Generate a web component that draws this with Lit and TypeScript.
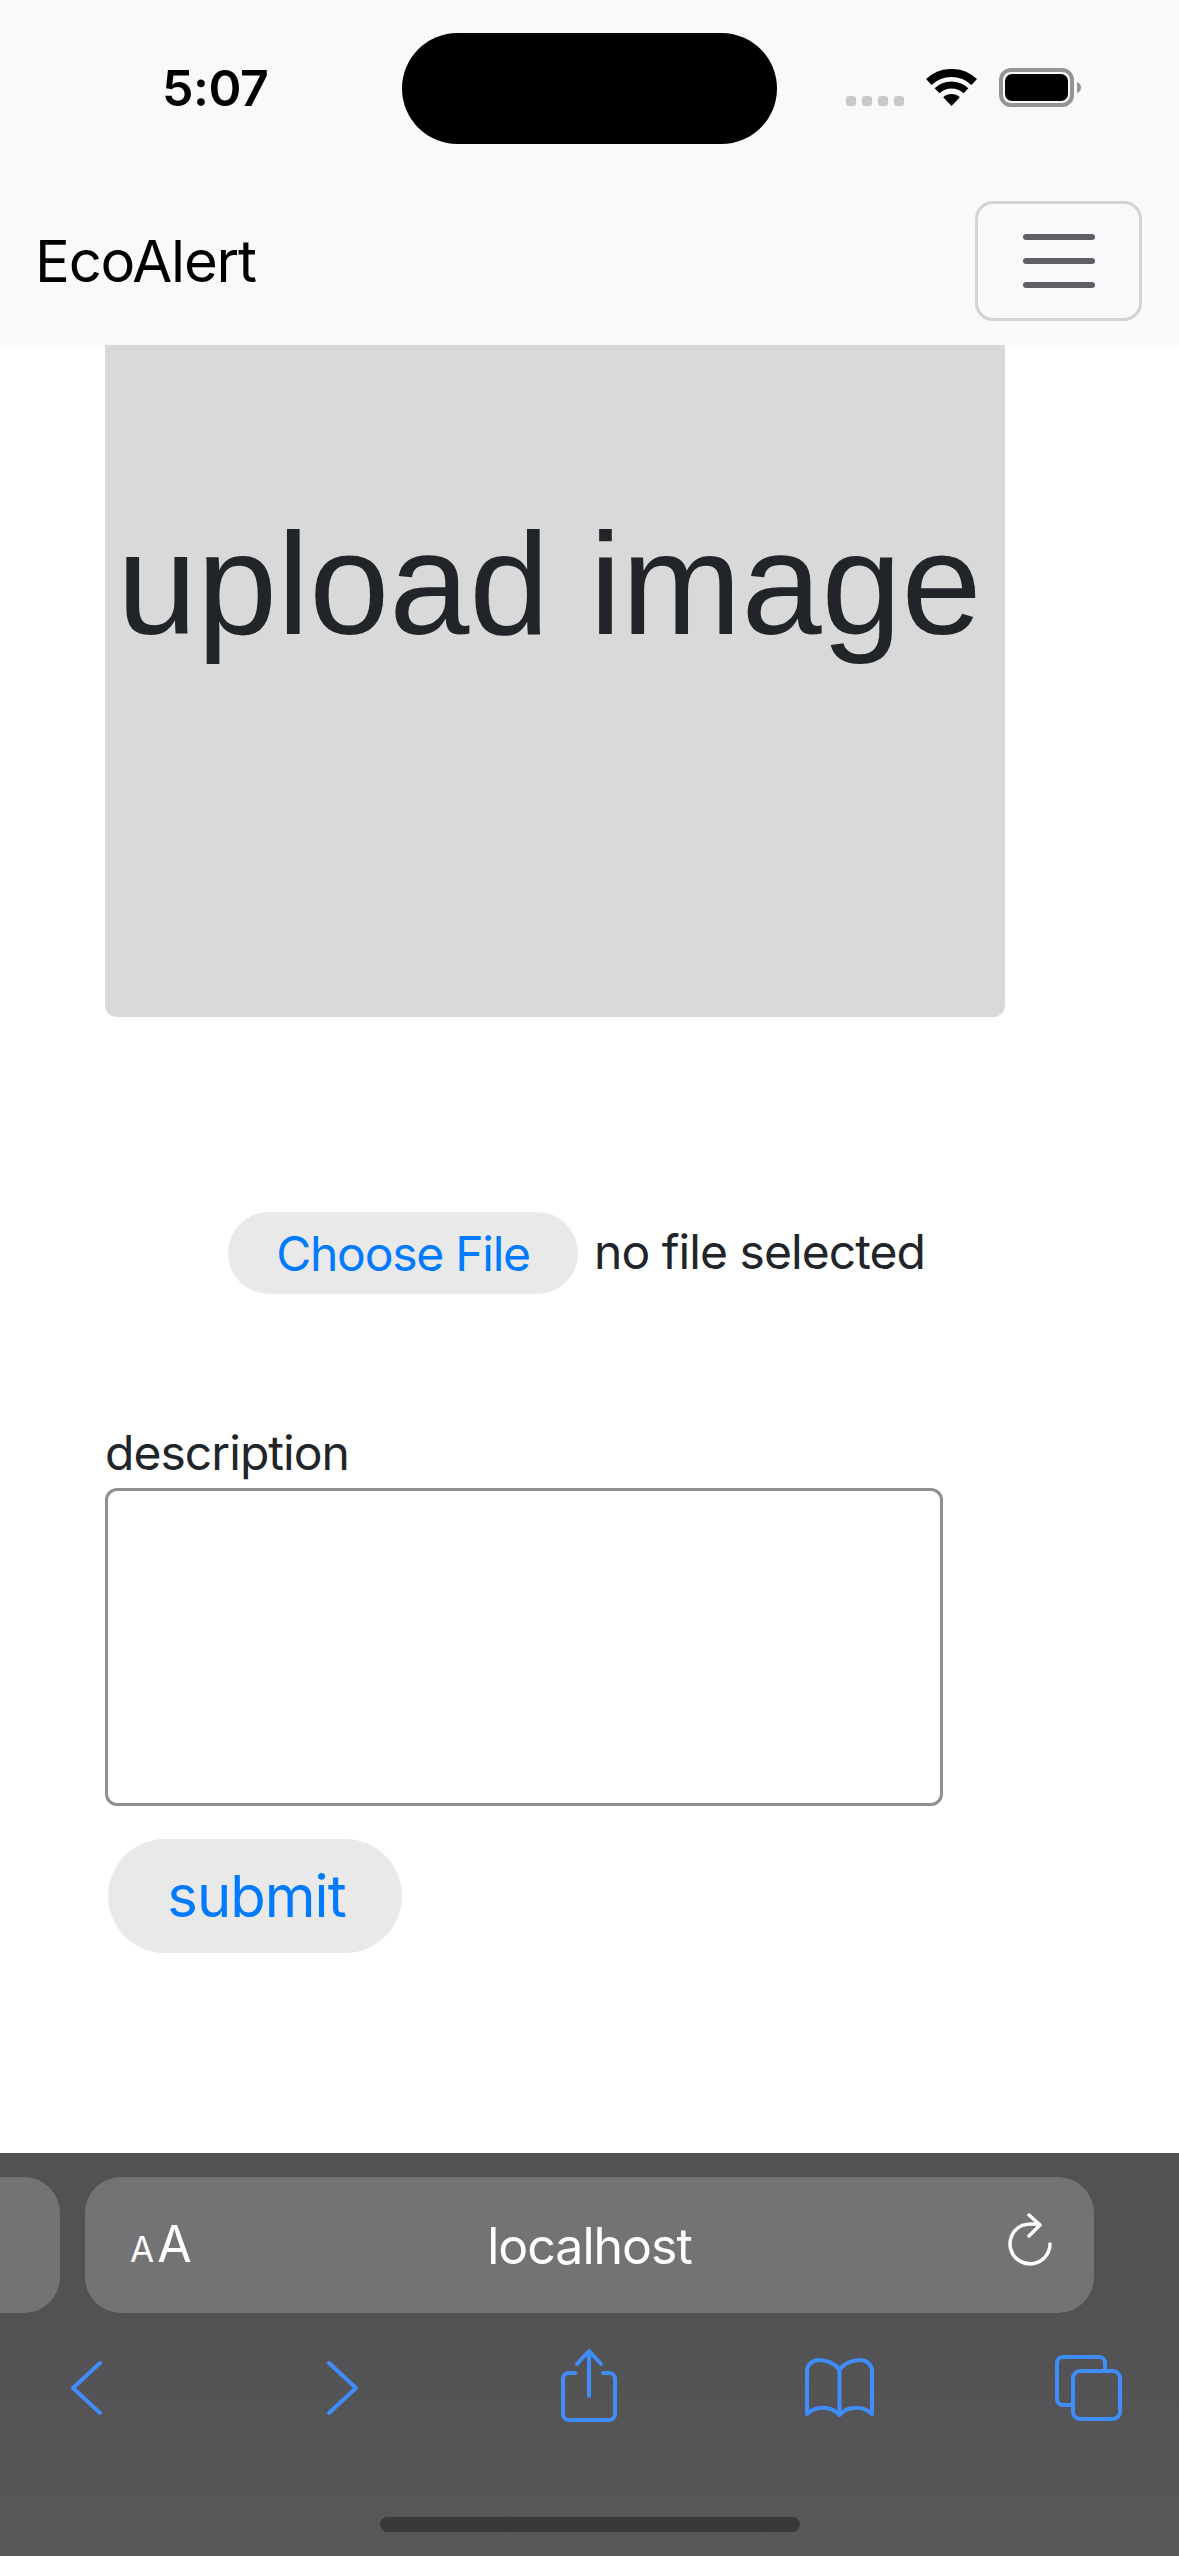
import { LitElement, html, css } from 'lit';
import { customElement } from 'lit/decorators.js';

const UI_FONT = css`Inter, "Noto Sans", "Liberation Sans", sans-serif`;

@customElement('app-root')
export class AppRoot extends LitElement {
  static override styles = css`
    :host {
      display: flex;
      flex-direction: column;
      width: 1179px;
      height: 2556px;
      background: #fff;
      overflow: hidden;
      font-family: ${UI_FONT};
      color: #212529;
    }

    /* status bar + navbar */
    .header {
      height: 345px;
      flex: none;
      background: #f8f9fa;
      display: flex;
      flex-direction: column;
    }
    .status {
      height: 201px;
      display: flex;
      align-items: flex-start;
      padding: 33px 0 0 162px;
      box-sizing: border-box;
      flex: none;
    }
    .time {
      width: 240px;
      font-size: 50px;
      font-weight: 600;
      line-height: 60px;
      margin-top: 25px;
      color: #000;
      letter-spacing: -0.5px;
    }
    .island {
      width: 375px;
      height: 111px;
      border-radius: 56px;
      background: #000;
    }
    .signal {
      display: flex;
      gap: 6px;
      margin: 63px 0 0 69px;
    }
    .signal i {
      width: 10px;
      height: 10px;
      border-radius: 3px;
      background: #c8c8ca;
    }
    .wifi {
      margin: 36px 0 0 22px;
    }
    .battery {
      margin: 35px 0 0 22px;
    }
    .nav {
      flex: 1;
      display: flex;
      justify-content: space-between;
      align-items: flex-start;
      padding: 0 37px 0 35px;
    }
    .brand {
      font-size: 58px;
      line-height: 70px;
      margin-top: 25px;
      color: #000;
      letter-spacing: -1.2px;
    }
    .toggler {
      width: 167px;
      height: 120px;
      box-sizing: border-box;
      border: 3px solid #d2d3d4;
      border-radius: 18px;
      background: none;
      padding: 0;
      display: flex;
      flex-direction: column;
      align-items: center;
      justify-content: center;
      gap: 18px;
    }
    .toggler i {
      width: 72px;
      height: 6px;
      border-radius: 3px;
      background: #5e6064;
    }

    /* form */
    .content {
      flex: 1;
      padding-left: 105px;
      display: flex;
      flex-direction: column;
      align-items: flex-start;
    }
    .upload {
      width: 900px;
      height: 672px;
      box-sizing: border-box;
      background: #d9d9d9;
      border-radius: 0 0 12px 12px;
      padding: 154px 0 0 12px;
      font-family: "Liberation Sans", Arial, sans-serif;
      font-size: 144px;
      line-height: 172px;
      white-space: nowrap;
    }
    .file-row {
      display: flex;
      align-items: center;
      gap: 16px;
      margin: 195px 0 0 123px;
    }
    .pill {
      border: none;
      background: #e9e9e9;
      color: #007aff;
      font-family: inherit;
      padding: 0;
      border-radius: 60px;
    }
    .choose {
      width: 350px;
      height: 82px;
      font-size: 48px;
      letter-spacing: -1.25px;
    }
    .no-file {
      font-size: 48px;
      line-height: 58px;
      margin-top: -2px;
      letter-spacing: -0.95px;
    }
    .label {
      font-size: 48px;
      line-height: 58px;
      margin-top: 130px;
      letter-spacing: -0.95px;
    }
    textarea {
      display: block;
      width: 838px;
      height: 318px;
      box-sizing: border-box;
      margin: 6px 0 0;
      border: 3px solid #8e8e93;
      border-radius: 12px;
      background: #fff;
      padding: 0;
      resize: none;
      outline: none;
    }
    .submit {
      width: 294px;
      height: 114px;
      margin: 33px 0 0 3px;
      padding-left: 3px;
      font-size: 58px;
      letter-spacing: -1px;
    }

    /* safari toolbar */
    .toolbar {
      height: 403px;
      flex: none;
      box-sizing: border-box;
      padding-top: 24px;
      background: linear-gradient(180deg, #525254 0%, #525254 40%, #585859 100%);
      display: flex;
      flex-direction: column;
    }
    .url-row {
      display: flex;
      gap: 25px;
      height: 136px;
      flex: none;
    }
    .tab-edge {
      width: 60px;
      background: #737375;
      border-radius: 0 36px 36px 0;
    }
    .url {
      width: 1009px;
      box-sizing: border-box;
      background: #737375;
      border-radius: 36px;
      padding: 0 42px 0 45px;
      display: grid;
      grid-template-columns: 1fr auto 1fr;
      align-items: center;
      color: #fff;
    }
    .aa {
      font-size: 50px;
      line-height: 60px;
      display: flex;
      align-items: baseline;
      gap: 3px;
      margin-top: 2px;
    }
    .aa small {
      font-size: 35px;
    }
    .host {
      font-size: 50px;
      line-height: 60px;
      margin: 1px 0 0 -3px;
      letter-spacing: -1px;
    }
    .reload {
      justify-self: end;
      margin-top: -10px;
    }
    .actions {
      display: flex;
      padding-left: 42px;
      margin-top: 27px;
      flex: none;
    }
    .actions svg {
      flex: none;
      fill: none;
      stroke: #3f8cfb;
      stroke-width: 4;
      stroke-linecap: round;
      stroke-linejoin: round;
    }
    .forward { margin-left: 166px; }
    .share { margin-left: 156px; }
    .book { margin-left: 161px; }
    .tabs { margin-left: 159px; }
    .home {
      width: 420px;
      height: 15px;
      border-radius: 8px;
      background: #39393a;
      margin: 87px 0 0 380px;
      flex: none;
    }
  `;

  override render() {
    return html`
      <div class="header">
        <div class="status">
          <div class="time">5:07</div>
          <div class="island"></div>
          <div class="signal"><i></i><i></i><i></i><i></i></div>
          <svg class="wifi" width="51" height="37" viewBox="0 0 51 37">
            <g fill="none" stroke="#000">
              <path stroke-width="8" d="M2.8 13 A33 33 0 0 1 48.2 13" />
              <path stroke-width="7" d="M11 21.8 A21 21 0 0 1 40 21.8" />
            </g>
            <path d="M25.5 37 L17.2 28.3 A12 12 0 0 1 33.8 28.3 Z" fill="#000" />
          </svg>
          <svg class="battery" width="83" height="39" viewBox="0 0 83 39">
            <rect x="2" y="2" width="71" height="35" rx="10" fill="none" stroke="#949496" stroke-width="4" />
            <rect x="6" y="6" width="63" height="27" rx="7" fill="#000" />
            <path d="M78 14 C81 15 82 17 82 19.5 C82 22 81 24 78 25 Z" fill="#949496" />
          </svg>
        </div>
        <div class="nav">
          <div class="brand">EcoAlert</div>
          <button class="toggler" aria-label="menu"><i></i><i></i><i></i></button>
        </div>
      </div>

      <div class="content">
        <div class="upload">upload image</div>
        <div class="file-row">
          <button class="pill choose">Choose File</button>
          <span class="no-file">no file selected</span>
        </div>
        <div class="label">description</div>
        <textarea></textarea>
        <button class="pill submit">submit</button>
      </div>

      <div class="toolbar">
        <div class="url-row">
          <div class="tab-edge"></div>
          <div class="url">
            <div class="aa"><small>A</small>A</div>
            <div class="host">localhost</div>
            <svg class="reload" width="44" height="54" viewBox="0 0 44 54" fill="none" stroke="#fff" stroke-width="3.5" stroke-linecap="round" stroke-linejoin="round">
              <path d="M42 31 A20 20 0 1 1 14 12.5 Q22 10 31 11.5" />
              <path d="M21 2 L32 12 L21 23" />
            </svg>
          </div>
        </div>
        <div class="actions">
          <svg width="90" height="90" viewBox="0 0 90 90"><path d="M58 23 L31 48 L58 73" /></svg>
          <svg class="forward" width="90" height="90" viewBox="0 0 90 90"><path d="M31 23 L58 48 L31 73" /></svg>
          <svg class="share" width="90" height="90" viewBox="0 0 90 90">
            <path d="M31 33 H25 a6 6 0 0 0 -6 6 V74 a6 6 0 0 0 6 6 H65 a6 6 0 0 0 6 -6 V39 a6 6 0 0 0 -6 -6 H59" />
            <path d="M45 12 V56 M33 24 L45 11 L57 24" />
          </svg>
          <svg class="book" width="90" height="90" viewBox="0 0 90 90">
            <path d="M44.5 30 C40 23 31 20 24 20 C17 20 12 25 12 31 V74 C20 66 36 65 44.5 75 C53 65 69 66 77 74 V31 C77 25 72 20 65 20 C58 20 49 23 44.5 30 Z M44.5 30 V75" />
          </svg>
          <svg class="tabs" width="90" height="90" viewBox="0 0 90 90">
            <path d="M27 65 H19 a6 6 0 0 1 -6 -6 V23 a6 6 0 0 1 6 -6 H55 a6 6 0 0 1 6 6 V31" />
            <rect x="29" y="31" width="47" height="48" rx="7" />
          </svg>
        </div>
        <div class="home"></div>
      </div>
    `;
  }
}

declare global {
  interface HTMLElementTagNameMap {
    'app-root': AppRoot;
  }
}
